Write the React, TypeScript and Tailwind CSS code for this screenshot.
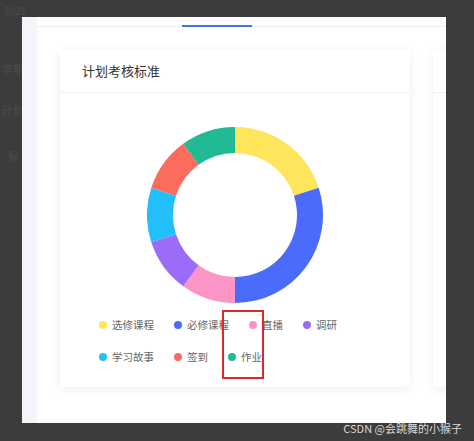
const data = [
  { name: '选修课程', value: 20, color: '#ffe55c' },
  { name: '必修课程', value: 30, color: '#4b6bfb' },
  { name: '直播', value: 10, color: '#fa95c6' },
  { name: '调研', value: 10, color: '#9b6cf8' },
  { name: '学习故事', value: 10, color: '#23bffb' },
  { name: '签到', value: 10, color: '#fb6c5d' },
  { name: '作业', value: 10, color: '#21b996' },
]

const point = (cx: number, cy: number, r: number, deg: number) => {
  const a = (deg * Math.PI) / 180
  return [cx + r * Math.sin(a), cy - r * Math.cos(a)]
}

const arc = (a0: number, a1: number) => {
  const R = 88
  const r = 62
  const c = 88
  const [x0, y0] = point(c, c, R, a0)
  const [x1, y1] = point(c, c, R, a1)
  const [x2, y2] = point(c, c, r, a1)
  const [x3, y3] = point(c, c, r, a0)
  const large = a1 - a0 > 180 ? 1 : 0
  return `M${x0} ${y0} A${R} ${R} 0 ${large} 1 ${x1} ${y1} L${x2} ${y2} A${r} ${r} 0 ${large} 0 ${x3} ${y3} Z`
}

const Donut = () => {
  const total = data.reduce((s, d) => s + d.value, 0)
  let acc = 0
  return (
    <svg width="176" height="176" viewBox="0 0 176 176">
      {data.map((d) => {
        const a0 = (acc / total) * 360
        acc += d.value
        const a1 = (acc / total) * 360
        return <path key={d.name} d={arc(a0, a1)} fill={d.color} />
      })}
    </svg>
  )
}

export default function App() {
  return (
    <div
      className="relative w-[474px] h-[441px] overflow-hidden bg-[#3c3c3c] pt-[17px] pl-[22px]"
      style={{ fontFamily: '"Noto Sans CJK SC", "Liberation Sans", sans-serif' }}
    >
      {/* faint page text behind the overlay */}
      <div className="absolute left-[4px] top-[3px] text-[10px] text-[#4c4c4c]">2021</div>
      <div className="absolute left-[2px] top-[61px] text-[11px] text-[#4c4c4c]">学期</div>
      <div className="absolute left-[2px] top-[102px] text-[11px] text-[#4c4c4c]">计划</div>
      <div className="absolute left-[8px] top-[148px] text-[11px] text-[#4c4c4c]">标</div>

      {/* window */}
      <div className="relative flex w-[424px] h-[406px] bg-white overflow-hidden">
        <div className="w-[15px] shrink-0 bg-[#f4f5fb]" />
        <div className="flex-1 flex flex-col min-w-0">
          {/* tab bar */}
          <div className="relative h-[10px] shrink-0 border-b border-[#eeeeee]">
            <div className="absolute left-[145px] bottom-[-1px] w-[70px] h-[2px] bg-[#3f78e0]" />
          </div>

          {/* content */}
          <div className="flex gap-[23px] pl-[23px] pt-[23px]">
            <div className="relative w-[350px] h-[337px] shrink-0 bg-white rounded-[3px] shadow-[0_2px_12px_rgba(0,0,0,0.07)] flex flex-col">
              <div className="h-[43px] flex items-center pl-[22px] border-b border-[#f0f0f0] text-[13px] text-[#333]">
                计划考核标准
              </div>
              <div className="flex justify-center pt-[34px]">
                <Donut />
              </div>
              <div className="flex flex-wrap w-[260px] ml-[39px] mt-[12px] gap-y-[13px] gap-x-[20px]">
                {data.map((d) => (
                  <div key={d.name} className="flex items-center gap-[5px] h-[19px]">
                    <span className="w-[8px] h-[8px] rounded-full" style={{ backgroundColor: d.color }} />
                    <span className="text-[10.5px] text-[#666]">{d.name}</span>
                  </div>
                ))}
              </div>
              {/* annotation box */}
              <div className="absolute left-[162px] top-[260px] w-[42px] h-[69px] border-2 border-[#e0262b]" />
            </div>

            <div className="w-[350px] h-[337px] shrink-0 bg-white rounded-[3px] shadow-[0_2px_12px_rgba(0,0,0,0.07)]">
              <div className="h-[43px] border-b border-[#f0f0f0]" />
            </div>
          </div>
        </div>
      </div>

      <div className="absolute right-[12px] bottom-[5px] text-[11px] text-[#d8d8d8]">CSDN @会跳舞的小猴子</div>
    </div>
  )
}
